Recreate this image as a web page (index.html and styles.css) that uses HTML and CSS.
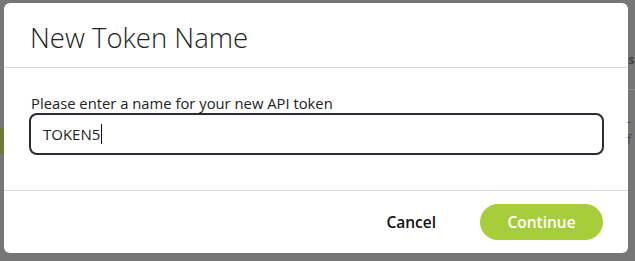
FILE: index.html
```html
<!DOCTYPE html>
<html lang="en">
<head>
    <meta charset="UTF-8">
    <meta name="viewport" content="width=device-width, initial-scale=1.0">
    <title>New Token Name</title>
    <link rel="stylesheet" href="styles.css">
</head>
<body>
    <div class="backdrop">
        <div class="page-peek left">
            <span class="band"></span>
        </div>
        <div class="modal">
            <div class="modal-header">
                <h1>New Token Name</h1>
            </div>
            <div class="modal-body">
                <label for="token-name">Please enter a name for your new API token</label>
                <div class="input-box">
                    <span class="value">TOKEN5</span><span class="caret"></span>
                </div>
            </div>
            <div class="modal-footer">
                <button class="btn-cancel">Cancel</button>
                <button class="btn-continue">Continue</button>
            </div>
        </div>
        <div class="page-peek right">
            <span class="peek-s">s</span>
            <span class="peek-line"></span>
            <span class="peek-f">-f</span>
        </div>
    </div>
</body>
</html>
```

FILE: styles.css
```css
* {
    box-sizing: border-box;
    font-family: "Open Sans", Arial, sans-serif;
}

body {
    margin: 0;
    padding: 0;
    background-color: #767676;
    width: 635px;
    height: 261px;
    overflow: hidden;
}

.backdrop {
    display: flex;
    height: 261px;
}

.page-peek {
    position: relative;
}

.page-peek.left {
    width: 4px;
}

.page-peek.left .band {
    position: absolute;
    left: 0;
    top: 128px;
    width: 4px;
    height: 26px;
    background-color: #6b7a3c;
}

.page-peek.right {
    width: 7px;
    color: #3d4a6a;
    font-size: 13px;
}

.peek-s {
    position: absolute;
    left: 0;
    top: 50px;
    font-weight: 700;
    color: #444;
}

.peek-line {
    position: absolute;
    left: 0;
    top: 89px;
    width: 7px;
    height: 1px;
    background-color: #8a8a8a;
}

.peek-f {
    position: absolute;
    left: -1px;
    top: 112px;
}

.modal {
    width: 624px;
    height: 250px;
    margin-top: 3px;
    background-color: #fff;
    border-radius: 6px;
    display: flex;
    flex-direction: column;
}

.modal-header {
    height: 65px;
    padding: 17px 26px 0;
    border-bottom: 1px solid #d9d9d9;
}

h1 {
    margin: 0;
    font-size: 27.5px;
    font-weight: 300;
    color: #222;
    line-height: 36px;
}

.modal-body {
    height: 123px;
    padding: 25px 24px 0 25px;
    border-bottom: 1px solid #d9d9d9;
}

label {
    display: block;
    margin-left: 2px;
    font-size: 14.8px;
    color: #222;
    line-height: 20px;
}

.input-box {
    height: 42px;
    border: 2px solid #2a2d31;
    border-radius: 8px;
    padding: 0 12px;
    display: flex;
    align-items: center;
    font-size: 15px;
    color: #222;
}

.caret {
    display: inline-block;
    width: 1px;
    height: 20px;
    background-color: #111;
    margin-left: 1px;
}

.modal-footer {
    flex: 1;
    display: flex;
    justify-content: flex-end;
    align-items: center;
    padding: 0 25px 0 0;
    gap: 44px;
}

button {
    font-size: 15.5px;
    font-weight: 600;
    border: none;
    cursor: pointer;
}

.btn-cancel {
    background: none;
    color: #111;
    padding: 0;
}

.btn-continue {
    width: 123px;
    height: 36px;
    border-radius: 18px;
    background-color: #a7ce3a;
    color: #fff;
}
```
